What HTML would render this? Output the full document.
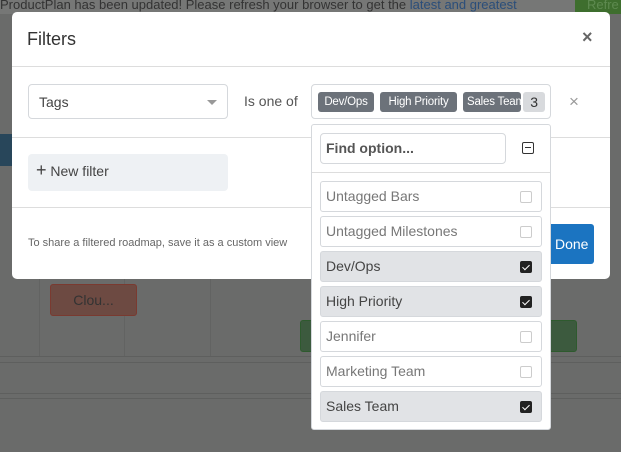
<!DOCTYPE html><html><head><style>
*{box-sizing:border-box;margin:0;padding:0}
body{width:621px;height:452px;overflow:hidden;background:#6a6b6a;font-family:"Liberation Sans",sans-serif;position:relative}
.a{position:absolute}
.m{left:12px;top:12px;width:598px;height:267px;background:#fff;border-radius:5px}
.tag{position:absolute;top:7px;background:#6c727a;color:#fff;font-size:11.5px;height:20px;line-height:20px;border-radius:3px;text-align:center;white-space:nowrap;overflow:hidden;letter-spacing:-0.2px}
.opt{left:320px;width:222px;height:31px;border:1px solid #d5d8dc;border-radius:3px;font-size:14px;color:#777;padding-left:5px;line-height:29px;background:#fff}
.opt.s{background:#e1e3e6;color:#444}
.cb{position:absolute;right:9px;top:9px;width:12px;height:12px;border:1px solid #ccc;border-radius:2px;background:#fff}
.s .cb{background:#222;border-color:#222}
.s .cb:after{content:"";position:absolute;left:3px;top:1px;width:3px;height:6px;border:solid #fff;border-width:0 1.5px 1.5px 0;transform:rotate(45deg)}
</style></head><body>
<div class="a" style="left:0;top:0;width:621px;height:14px;background:#767776;color:#333;font-size:13px;line-height:10px;white-space:nowrap;overflow:hidden">ProductPlan has been updated! Please refresh your browser to get the <span style="color:#2b4e7a">latest and greatest</span></div>
<div class="a" style="left:575px;top:0;width:46px;height:14px;background:#3e6e2e;color:#5e8a50;font-size:13px;line-height:10px;padding-left:12px">Refre</div>
<div class="a" style="left:0;top:134px;width:12px;height:32px;background:#28465a"></div>
<div class="a" style="left:0;top:356px;width:621px;height:1px;background:#5e5f5e"></div>
<div class="a" style="left:0;top:362px;width:621px;height:1px;background:#5e5f5e"></div>
<div class="a" style="left:0;top:393px;width:621px;height:1px;background:#5e5f5e"></div>
<div class="a" style="left:0;top:398px;width:621px;height:1px;background:#5e5f5e"></div>
<div class="a" style="left:39px;top:279px;width:1px;height:77px;background:#626362"></div>
<div class="a" style="left:124px;top:279px;width:1px;height:77px;background:#626362"></div>
<div class="a" style="left:210px;top:279px;width:1px;height:77px;background:#626362"></div>
<div class="a" style="left:50px;top:284px;width:87px;height:32px;background:#6d4a42;border:1px solid #7a3a30;border-radius:3px;color:#333;font-size:14px;text-align:center;line-height:30px">Clou...</div>
<div class="a" style="left:300px;top:320px;width:277px;height:32px;background:#3c5a3e;border:1px solid #2e5a2e;border-radius:3px"></div>
<div class="a m">
<div class="a" style="left:15px;top:17px;font-size:18px;color:#333">Filters</div>
<div class="a" style="left:570px;top:15px;font-size:18px;color:#666;font-weight:bold">×</div>
<div class="a" style="left:0;top:54px;width:598px;height:1px;background:#ddd"></div>
<div class="a" style="left:16px;top:72px;width:200px;height:35px;border:1px solid #d5d8dc;border-radius:4px;font-size:14px;color:#444;padding:9px 10px">Tags<span style="position:absolute;right:10px;top:15px;border:5px solid transparent;border-top-color:#999;border-bottom:0"></span></div>
<div class="a" style="left:232px;top:81px;font-size:14px;color:#555">Is one of</div>
<div class="a" style="left:299px;top:72px;width:240px;height:35px;border:1px solid #d5d8dc;border-radius:4px">
<span class="tag" style="left:6px;width:56px">Dev/Ops</span>
<span class="tag" style="left:68px;width:77px">High Priority</span>
<span class="tag" style="left:151px;width:58px;text-align:left;padding-left:4px">Sales Team</span>
<span class="tag" style="left:211px;width:22px;background:#d8dadd;color:#333;font-size:14px">3</span>
</div>
<div class="a" style="left:557px;top:80px;font-size:17px;color:#999">×</div>
<div class="a" style="left:0;top:125px;width:598px;height:1px;background:#ddd"></div>
<div class="a" style="left:16px;top:142px;width:200px;height:37px;background:#eef1f4;border-radius:4px;font-size:14px;color:#444;padding:9px 8px"><b style="font-size:18px;font-weight:normal;line-height:14px">+</b> New filter</div>
<div class="a" style="left:0;top:195px;width:598px;height:1px;background:#ddd"></div>
<div class="a" style="left:16px;top:225px;font-size:11px;color:#666">To share a filtered roadmap, save it as a custom view</div>
<div class="a" style="left:520px;top:212px;width:62px;height:40px;background:#1b74c1;border-radius:3px;color:#fff;font-size:14px;line-height:40px;padding-left:23px">Done</div>
</div>
<div class="a" style="left:311px;top:124px;width:240px;height:306px;background:#fff;border:1px solid #d5d8dc;border-radius:3px"></div>
<div class="a" style="left:320px;top:133px;width:186px;height:31px;border:1px solid #d5d8dc;border-radius:4px;font-size:14px;color:#555;font-weight:bold;padding:6px 5px">Find option...</div>
<div class="a" style="left:522px;top:142px;width:12px;height:12px;border:1.5px solid #333;border-radius:2px"><div style="margin:3.5px 2px;height:1.5px;background:#333"></div></div>
<div class="a" style="left:312px;top:172px;width:238px;height:1px;background:#ddd"></div>
<div class="a opt" style="top:181px">Untagged Bars<span class="cb"></span></div>
<div class="a opt" style="top:216px">Untagged Milestones<span class="cb"></span></div>
<div class="a opt s" style="top:251px">Dev/Ops<span class="cb"></span></div>
<div class="a opt s" style="top:286px">High Priority<span class="cb"></span></div>
<div class="a opt" style="top:321px">Jennifer<span class="cb"></span></div>
<div class="a opt" style="top:356px">Marketing Team<span class="cb"></span></div>
<div class="a opt s" style="top:391px">Sales Team<span class="cb"></span></div>
</body></html>
